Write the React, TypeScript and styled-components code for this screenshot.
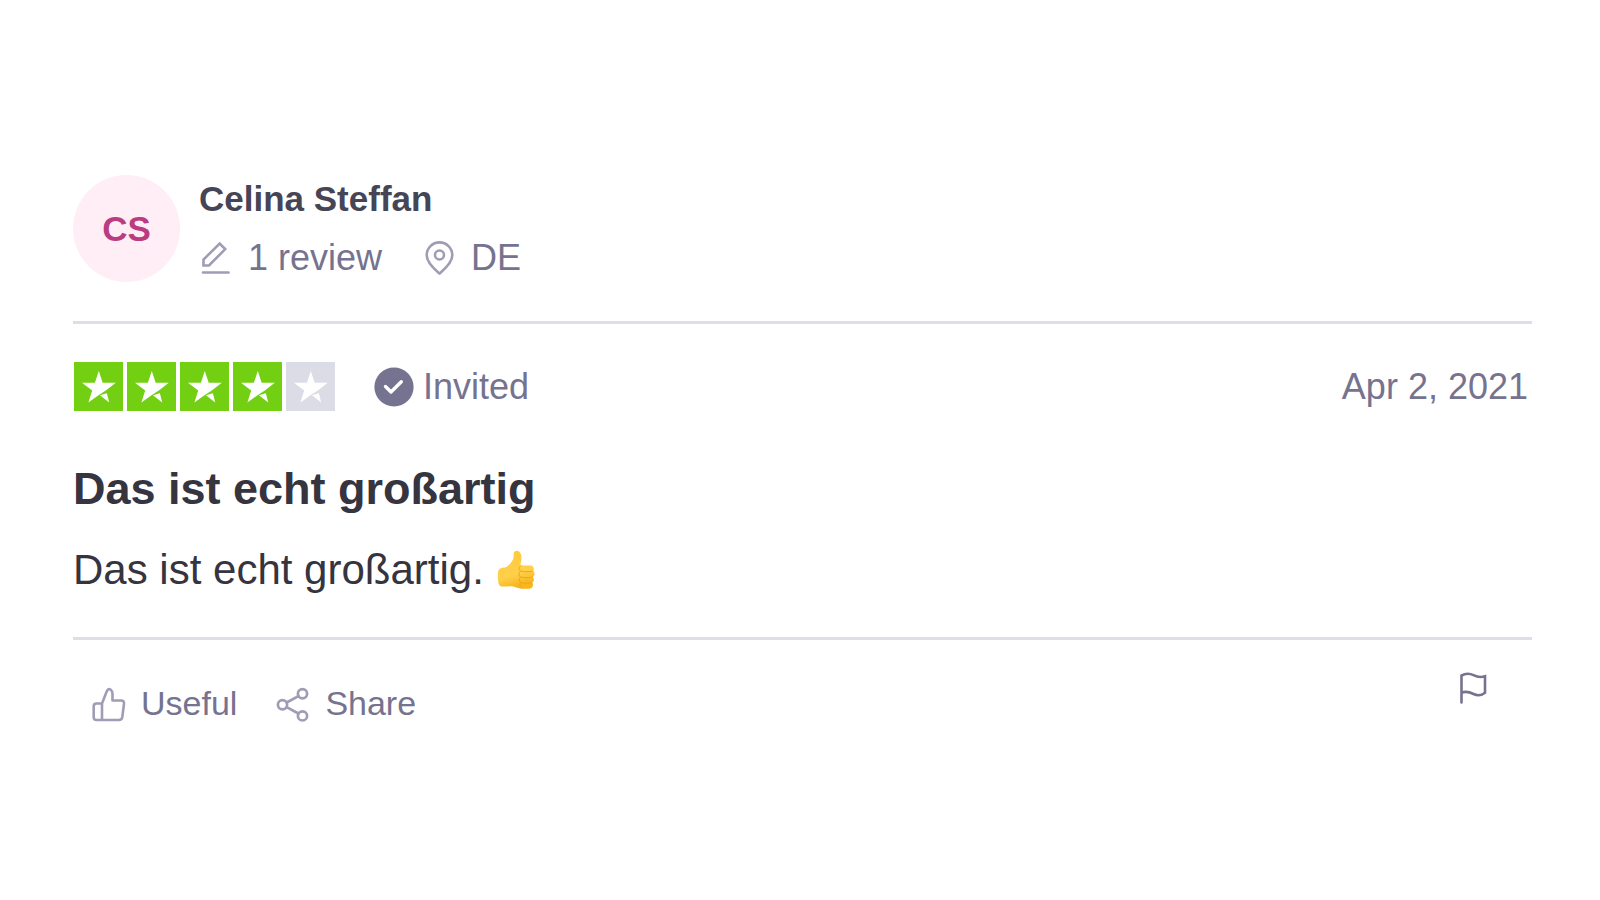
import React from "react";
import styled, { createGlobalStyle } from "styled-components";

const GlobalStyle = createGlobalStyle`
  * { box-sizing: border-box; }
  body {
    margin: 0;
    background: #ffffff;
    font-family: "Liberation Sans", Arial, sans-serif;
    color: #35343f;
  }
`;

const Page = styled.main`
  padding: 175px 68px 175px 73px;
`;

const Header = styled.header`
  display: flex;
  align-items: center;
  gap: 19px;
  padding-bottom: 39px;
  border-bottom: 3px solid #dfdee8;
`;

const Avatar = styled.div`
  display: flex;
  align-items: center;
  justify-content: center;
  flex: none;
  width: 107px;
  height: 107px;
  border-radius: 50%;
  background: #ffeef5;
  color: #b93d80;
  font-size: 35px;
  font-weight: 700;
`;

const Profile = styled.div`
  display: flex;
  flex-direction: column;
  gap: 10px;
`;

const Name = styled.div`
  font-size: 35px;
  line-height: 48px;
  font-weight: 700;
  color: #464555;
`;

const Meta = styled.div`
  display: flex;
  gap: 42px;
`;

const MetaItem = styled.div`
  display: flex;
  align-items: center;
  gap: 16px;
  font-size: 36px;
  line-height: 49px;
  color: #75738f;
`;

const Content = styled.section`
  padding: 38px 0 39px;
  border-bottom: 3px solid #dfdee8;
`;

const RatingRow = styled.div`
  display: flex;
  align-items: center;
  justify-content: space-between;
  padding-right: 4px;
  color: #75738f;
  font-size: 36px;
  line-height: 49px;
`;

const Rating = styled.div`
  display: flex;
  align-items: center;
  gap: 39px;
`;

const Stars = styled.div`
  display: flex;
  gap: 4px;
  padding-left: 1px;
`;

const StarTile = styled.svg<{ $filled: boolean }>`
  display: block;
  width: 49px;
  height: 49px;
  background: ${(p) => (p.$filled ? "#73cf11" : "#dcdce6")};
`;

const Invited = styled.div`
  display: flex;
  align-items: center;
  gap: 9px;
`;

const Title = styled.h1`
  margin: 50px 0 25px;
  font-size: 45px;
  line-height: 56px;
  font-weight: 700;
`;

const Body = styled.p`
  display: flex;
  align-items: center;
  gap: 13px;
  margin: 0;
  font-size: 42px;
  line-height: 56px;
`;

const Footer = styled.footer`
  display: flex;
  align-items: flex-start;
  justify-content: space-between;
  padding: 32px 43px 0 18px;
`;

const Actions = styled.div`
  display: flex;
  gap: 38px;
  padding-top: 12px;
`;

const Action = styled.button`
  display: flex;
  align-items: flex-end;
  gap: 14px;
  padding: 0;
  border: 0;
  background: none;
  color: #75738f;
  font-family: inherit;
  font-size: 34px;
  line-height: 38px;
  cursor: pointer;
`;

const Icon = styled.svg`
  display: block;
  flex: none;
  fill: none;
  stroke: currentColor;
  stroke-linejoin: round;
  stroke-linecap: round;
`;

const MutedIcon = styled(Icon)`
  color: #9f9db5;
`;

const Star = ({ filled }: { filled: boolean }) => (
  <StarTile $filled={filled} viewBox="0 0 49 49" aria-hidden="true">
    <path
      fill="#fff"
      d="M24.8 9 28.700 20.800 41.800 20.800 31.800 28.500 24.500 33.200 14.400 40.500 18.200 28.500 8 20.800 20.900 20.800ZM26 33.200 32.900 31.200 35.200 40.500Z"
    />
  </StarTile>
);

const ThumbEmoji = () => (
  <svg width="38" height="40" viewBox="0 0 38 40" role="img" aria-label="thumbs up">
    <defs>
      <linearGradient id="hand" x1="0" y1="0" x2="0.3" y2="1">
        <stop offset="0" stopColor="#ffc93a" />
        <stop offset="0.7" stopColor="#ffd04a" />
        <stop offset="1" stopColor="#f8b51c" />
      </linearGradient>
    </defs>
    <path
      fill="url(#hand)"
      d="M1 23C1 19 4 17.500 8 17.500 12 16 15.500 11.500 16.500 8 17 5 16 2 18.500 1 22.500 0 24.500 4 24.500 7.500 24.500 11 23.500 13 23.500 15.500L33.500 15.500C36.500 15.500 38 19.500 36 21 38.200 22 38 25.500 35.800 27 37.500 28.500 37.200 31.500 35.200 32.500 37 34.500 35.500 38.500 32.500 38.700 26 39.200 21 38.500 16.500 36.500 13 35.500 8 37 4.500 36.500 1 36 .5 29 1 23Z"
    />
    <path
      fill="none"
      stroke="#eeaa12"
      strokeWidth="1"
      strokeLinecap="round"
      d="M24 15.700C21.500 17 21.500 20 23.500 21 21.500 22.500 21.500 26 23.500 27 22 28.500 22 31.500 24 32.500 22.500 34 22.500 36.500 24.500 38M24 21.200C28 22 32 21.800 35.800 21.200M24 27.100C28 28 32 27.800 35.500 27.100M24.500 32.700C28 33.500 31.500 33.300 34.800 32.700"
    />
  </svg>
);

export default function App() {
  return (
    <>
      <GlobalStyle />
      <Page>
        <article>
          <Header>
            <Avatar>CS</Avatar>
            <Profile>
              <Name>Celina Steffan</Name>
              <Meta>
                <MetaItem>
                  <MutedIcon width="33" height="34" viewBox="0 0 33 34" strokeWidth="2.600" aria-hidden="true">
                    <path strokeLinejoin="miter" d="M4.500 24.500V18.500L20.700 2.600 26.200 8.100 10 24.500Z" />
                    <path d="M4 31.500H29.500" />
                  </MutedIcon>
                  1 review
                </MetaItem>
                <MetaItem>
                  <MutedIcon width="31" height="34" viewBox="0 0 31 34" strokeWidth="2.600" aria-hidden="true">
                    <path d="M15.500 32.500C11 28.500 2.700 22 2.700 14.200A12.800 12.800 0 0 1 28.300 14.200C28.300 22 20 28.500 15.500 32.500Z" />
                    <circle cx="15.500" cy="14" r="4.500" />
                  </MutedIcon>
                  DE
                </MetaItem>
              </Meta>
            </Profile>
          </Header>

          <Content>
            <RatingRow>
              <Rating>
                <Stars role="img" aria-label="Rated 4 out of 5 stars">
                  {[1, 2, 3, 4, 5].map((n) => (
                    <Star key={n} filled={n <= 4} />
                  ))}
                </Stars>
                <Invited>
                  <Icon width="40" height="40" viewBox="0 0 40 40" strokeWidth="0" aria-hidden="true">
                    <circle cx="20" cy="20" r="19.600" fill="#75738f" />
                    <path d="M11.500 19.500 17 25 27.300 14.700" stroke="#fff" strokeWidth="3.400" />
                  </Icon>
                  Invited
                </Invited>
              </Rating>
              <time dateTime="2021-04-02">Apr 2, 2021</time>
            </RatingRow>
            <Title>Das ist echt großartig</Title>
            <Body>
              Das ist echt großartig.
              <ThumbEmoji />
            </Body>
          </Content>

          <Footer>
            <Actions>
              <Action type="button">
                <MutedIcon width="36" height="36" viewBox="0 0 36 36" strokeWidth="2.600" aria-hidden="true">
                  <path d="M11 17.500H5.500Q2.700 17.500 2.700 20.300V31.200Q2.700 34 5.500 34H11ZM11 17.500 15.500 6Q17 2 19.500 3.500 21.500 5 21.500 8V14.500H30Q33.400 14.500 33 17.700L31.300 31Q30.800 34 28 34H11" />
                </MutedIcon>
                Useful
              </Action>
              <Action type="button">
                <MutedIcon width="36" height="36" viewBox="0 0 36 36" strokeWidth="2.700" aria-hidden="true">
                  <circle cx="7.500" cy="18.800" r="4.600" />
                  <circle cx="27.500" cy="7.700" r="4.600" />
                  <circle cx="27.500" cy="29.900" r="4.600" />
                  <path d="M11.700 16.500 23.400 10.100M11.700 21.100 23.400 27.500" />
                </MutedIcon>
                Share
              </Action>
            </Actions>
            <Action type="button" aria-label="Report review">
              <Icon width="30" height="33" viewBox="0 0 30 33" strokeWidth="2.600" aria-hidden="true">
                <path
                  strokeLinejoin="miter"
                  d="M2.500 30.500V3.500C7 1 11.500 1.700 14.500 3.200 18 5 22 5.600 26 4.300V20.800C22 24 17.500 23.500 14.500 22 11 20.200 7 18.800 2.500 20.800"
                />
              </Icon>
            </Action>
          </Footer>
        </article>
      </Page>
    </>
  );
}
